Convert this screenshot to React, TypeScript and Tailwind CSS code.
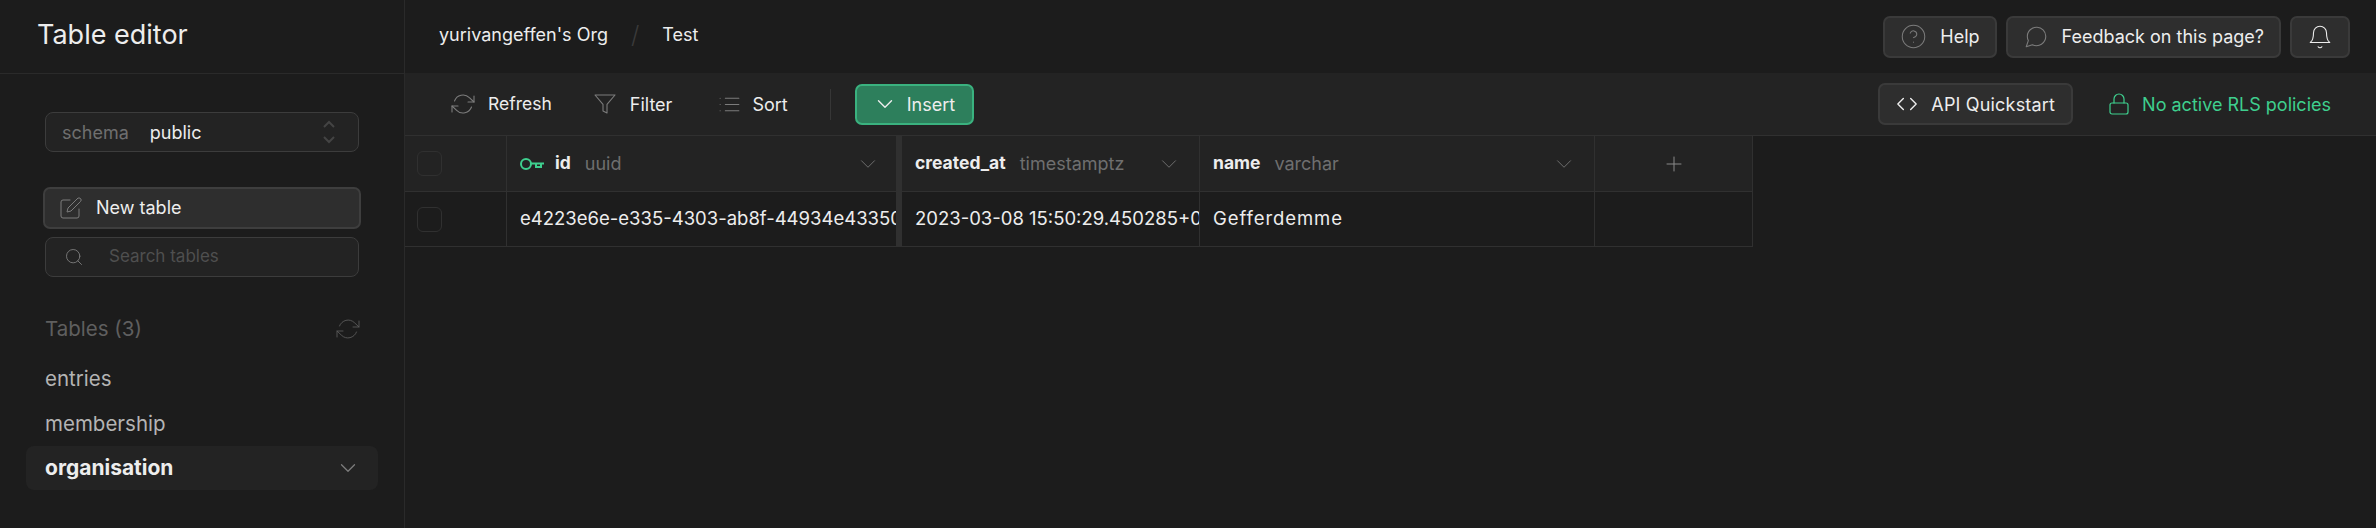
import { ReactNode } from "react";
import {
  FiBell,
  FiChevronDown,
  FiCode,
  FiEdit,
  FiFilter,
  FiHelpCircle,
  FiList,
  FiLock,
  FiMessageCircle,
  FiPlus,
  FiRefreshCw,
  FiSearch,
} from "react-icons/fi";

const KeyIcon = () => (
  <svg width="25" height="14" viewBox="0 0 25 14" fill="none" stroke="#3ecf8e" strokeWidth="2">
    <circle cx="6" cy="7" r="5" />
    <path d="M11 6.5h13M16 6.5v3.5h5V6.5" />
  </svg>
);

const UpDownIcon = () => (
  <svg width="14" height="24" viewBox="0 0 14 24" fill="none" stroke="#444444" strokeWidth="2">
    <path d="M2 7l5-5 5 5M2 17l5 5 5-5" />
  </svg>
);

const TopButton = ({ icon, label, className = "px-[15px]" }: { icon: ReactNode; label: string; className?: string }) => (
  <div className={`flex h-[42px] items-center gap-[13px] rounded-[7px] border-2 border-[#3a3a3a] bg-[#2e2e2e] text-[18px] text-[#ededed] ${className}`}>
    {icon}
    {label}
  </div>
);

const ToolButton = ({ icon, label, className }: { icon: ReactNode; label: string; className: string }) => (
  <div className={`flex items-center text-[#ededed] ${className}`}>
    {icon}
    {label}
  </div>
);

const Checkbox = () => <div className="h-[25px] w-[25px] rounded-[6px] border border-[#303030]" />;

const HeaderCell = ({
  name,
  type,
  className,
  icon,
}: {
  name: string;
  type: string;
  className: string;
  icon?: ReactNode;
}) => (
  <div className={`flex items-center border-r border-[#303030] text-[18px] ${className}`}>
    {icon}
    <span className="text-[17.5px] font-bold text-[#ededed]">{name}</span>
    <span className="ml-[14px] text-[#6f6f6f]">{type}</span>
    <FiChevronDown className="ml-auto text-[#6f6f6f]" size={26} strokeWidth={0.9} />
  </div>
);

const BodyCell = ({ text, className }: { text: string; className: string }) => (
  <div className={`flex items-center overflow-hidden border-r border-[#303030] text-[18.5px] whitespace-nowrap text-[#ededed] ${className}`}>
    {text}
  </div>
);

export default function App() {
  return (
    <div className="flex h-[528px] w-[2376px] overflow-hidden bg-[#1c1c1c] font-['Inter',sans-serif]">
      <aside className="flex w-[405px] flex-none flex-col border-r border-[#2a2a2a]">
        <div className="flex h-[74px] flex-none items-center border-b border-[#2a2a2a] pb-[3px] pl-[37px] text-[27px] text-[#ededed]">
          Table editor
        </div>
        <div className="flex flex-col px-[45px] pt-[38px]">
          <div className="flex h-[40px] items-center rounded-[8px] border border-[#3c3c3c] bg-[#232323] pl-[16px] pr-[17px] text-[18px]">
            <span className="text-[#6f6f6f]">schema</span>
            <span className="ml-[21px] text-[#ededed]">public</span>
            <div className="ml-auto mr-[5px]">
              <UpDownIcon />
            </div>
          </div>
          <div className="-mx-[2px] mt-[35px] flex h-[42px] items-center gap-[13px] rounded-[7px] border-2 border-[#3e3e3e] bg-[#2e2e2e] pl-[14px] text-[18px] text-[#ededed]">
            <FiEdit className="text-[#7c7c7c]" size={24} strokeWidth={1} />
            <span className="pb-[2px]">New table</span>
          </div>
          <div className="mt-[8px] flex h-[40px] items-center rounded-[8px] border border-[#3c3c3c] bg-[#232323] pl-[18px] text-[17px] text-[#4f4f4f]">
            <FiSearch className="text-[#7c7c7c]" size={20} strokeWidth={1.1} />
            <span className="ml-[25px]">Search tables</span>
          </div>
          <div className="mt-[37px] flex h-[30px] items-center justify-between text-[20.5px] text-[#5f5f5f]">
            Tables (3)
            <FiRefreshCw className="-mr-px text-[#5a5a5a]" size={24} strokeWidth={0.9} />
          </div>
          <div className="mt-[13px] flex h-[44px] items-center text-[20.5px] text-[#b4b4b4]">entries</div>
          <div className="mt-px flex h-[44px] items-center text-[20.5px] text-[#b4b4b4]">membership</div>
          <div className="-mx-[19px] flex h-[44px] items-center justify-between rounded-[8px] bg-[#232323] pl-[19px] pr-[17px] text-[21px] font-bold text-[#ededed]">
            organisation
            <FiChevronDown className="text-[#7c7c7c]" size={26} strokeWidth={1.2} />
          </div>
        </div>
      </aside>

      <main className="flex min-w-0 flex-1 flex-col">
        <header className="flex h-[73px] flex-none items-center justify-between pl-[34px] pr-[26px]">
          <div className="flex items-center pb-[4px] text-[18px] text-[#ededed]">
            yurivangeffen's Org
            <span className="mx-[23px] text-[24px] font-light text-[#3a3a3a]">/</span>
            Test
          </div>
          <div className="flex items-center gap-[9px]">
            <TopButton icon={<FiHelpCircle className="text-[#7c7c7c]" size={27} strokeWidth={0.9} />} label="Help" />
            <TopButton icon={<FiMessageCircle className="text-[#7c7c7c]" size={26} strokeWidth={1} />} label="Feedback on this page?" />
            <div className="flex h-[42px] w-[60px] items-center justify-center rounded-[7px] border-2 border-[#3a3a3a] bg-[#2e2e2e] text-[#ededed]">
              <FiBell size={26} strokeWidth={1} />
            </div>
          </div>
        </header>

        <div className="flex h-[63px] flex-none items-center border-b border-[#303030] bg-[#232323] pl-[46px] pr-[45px]">
          <ToolButton className="gap-[13px] text-[17.5px]" icon={<FiRefreshCw className="text-[#7c7c7c]" size={24} strokeWidth={1.1} />} label="Refresh" />
          <ToolButton className="ml-[41px] gap-[13px] text-[18px]" icon={<FiFilter className="text-[#7c7c7c]" size={24} strokeWidth={1.1} />} label="Filter" />
          <ToolButton className="ml-[45px] gap-[10px] text-[18px]" icon={<FiList className="text-[#7c7c7c]" size={25} strokeWidth={1} />} label="Sort" />
          <div className="ml-[42px] h-[31px] w-px bg-[#363636]" />
          <div className="ml-[24px] flex h-[41px] w-[119px] items-center gap-[9px] rounded-[7px] border-2 border-[#3ab27f] bg-[#2d7f5c] pl-[15px] text-[18px] text-[#ededed]">
            <FiChevronDown size={26} strokeWidth={1.3} />
            Insert
          </div>
          <div className="ml-auto">
            <TopButton
              className="px-[16px] tracking-[0.01em]"
              icon={<FiCode className="text-[#ededed]" size={22} strokeWidth={1.5} />}
              label="API Quickstart"
            />
          </div>
          <div className="ml-[34px] flex items-center gap-[11px] text-[18px] text-[#3ecf8e]">
            <FiLock size={24} strokeWidth={1.2} />
            No active RLS policies
          </div>
        </div>

        <div className="flex h-[56px] w-[1348px] flex-none border-b border-[#303030] bg-[#232323]">
          <div className="flex w-[102px] flex-none items-center border-r border-[#303030] pl-[12px]">
            <Checkbox />
          </div>
          <HeaderCell
            name="id"
            type="uuid"
            className="w-[395px] flex-none border-r-[6px] pl-[13px] pr-[15px]"
            icon={
              <span className="mr-[10px]">
                <KeyIcon />
              </span>
            }
          />
          <HeaderCell name="created_at" type="timestamptz" className="w-[298px] flex-none pl-[13px] pr-[17px]" />
          <HeaderCell name="name" type="varchar" className="w-[395px] flex-none pl-[13px] pr-[17px]" />
          <div className="flex w-[158px] flex-none items-center justify-center border-r border-[#303030] text-[#8a8a8a]">
            <FiPlus size={24} strokeWidth={1} />
          </div>
        </div>

        <div className="flex h-[55px] w-[1348px] flex-none border-b border-[#303030]">
          <div className="flex w-[102px] flex-none items-center border-r border-[#303030] pl-[12px]">
            <Checkbox />
          </div>
          <BodyCell text="e4223e6e-e335-4303-ab8f-44934e43350c" className="w-[395px] flex-none border-r-[6px] pl-[13px]" />
          <BodyCell text="2023-03-08 15:50:29.450285+00:00" className="w-[298px] flex-none pl-[13px]" />
          <BodyCell text="Gefferdemme" className="w-[395px] flex-none pl-[13px] tracking-[0.05em]" />
          <div className="w-[158px] flex-none border-r border-[#303030]" />
        </div>
      </main>
    </div>
  );
}
